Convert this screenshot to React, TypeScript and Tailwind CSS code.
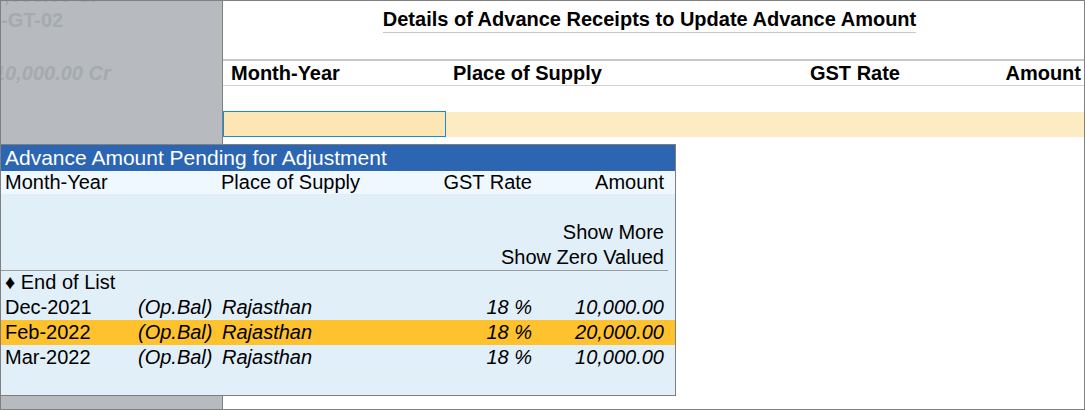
import React from "react";

const pending = [
  { month: "Dec-2021", place: "Rajasthan", rate: "18 %", amount: "10,000.00", active: false },
  { month: "Feb-2022", place: "Rajasthan", rate: "18 %", amount: "20,000.00", active: true },
  { month: "Mar-2022", place: "Rajasthan", rate: "18 %", amount: "10,000.00", active: false },
];

export default function App() {
  return (
    <div className="relative h-[410px] w-[1085px] overflow-hidden border border-[#808080] bg-white font-['Liberation_Sans',Arial,sans-serif] text-[20px] text-black">
      <div className="flex h-full">
        {/* Voucher behind the screen, dimmed */}
        <div className="w-[222px] shrink-0 overflow-hidden border-r border-[#808080] bg-[#b7bbbf] font-bold leading-[25px] text-[#a6aaae]">
          <div className="-mt-[18px] -ml-[8px] whitespace-nowrap">0,000.00 Cr</div>
          <div className="whitespace-nowrap">-GT-02</div>
          <div className="mt-[28px] -ml-[7px] whitespace-nowrap italic">10,000.00 Cr</div>
        </div>

        {/* Advance receipts detail */}
        <div className="flex min-w-0 flex-1 flex-col">
          <div className="flex justify-center pt-[6px] pr-[8px]">
            <span className="border-b border-[#c8c8c8] leading-[25px] font-bold">
              Details of Advance Receipts to Update Advance Amount
            </span>
          </div>

          <div className="mt-[26px] flex h-[27px] items-center border-t-2 border-b border-t-[#c8c8c8] border-b-[#d4d4d4] pr-[3px] pl-[8px] font-bold leading-[25px]">
            <div className="w-[222px]">Month-Year</div>
            <div className="flex-1">Place of Supply</div>
            <div>GST Rate</div>
            <div className="w-[181px] text-right">Amount</div>
          </div>

          <div className="mt-[25px] flex items-end">
            <div className="h-[26px] w-[223px] border border-[#1c8ad3] bg-[#fde6b3]" />
            <div className="h-[25px] flex-1 bg-[#fdebc4]" />
          </div>
        </div>
      </div>

      {/* Pending advances popup */}
      <div className="absolute top-[143px] -left-px flex h-[252px] w-[676px] flex-col border border-[#7f7f7f] bg-[#e1eff9]">
        <div className="h-[26px] bg-[#2c65b1] pl-[4px] text-[21px] leading-[26px] text-white">
          Advance Amount Pending for Adjustment
        </div>
        <div className="flex h-[23px] bg-[#eef8fe] pr-[11px] pl-[4px] leading-[22px]">
          <div className="w-[216px]">Month-Year</div>
          <div className="flex-1">Place of Supply</div>
          <div>GST Rate</div>
          <div className="w-[132px] text-right">Amount</div>
        </div>

        <div className="pt-[26px] pr-[11px] text-right leading-[25px]">
          <div>Show More</div>
          <div>Show Zero Valued</div>
        </div>
        <div className="mr-[7px] border-t border-[#9a9a9a]" />

        <div className="h-[24px] pl-[4px] leading-[22px]">♦ End of List</div>
        {pending.map((r) => (
          <div
            key={r.month}
            className={
              r.active
                ? "flex h-[25px] bg-[#fec22e] pr-[11px] pl-[4px] leading-[25px]"
                : "flex h-[25px] pr-[11px] pl-[4px] leading-[25px]"
            }
          >
            <div className="w-[133px]">{r.month}</div>
            <div className="w-[84px] italic">(Op.Bal)</div>
            <div className="flex-1 italic">{r.place}</div>
            <div className="italic">{r.rate}</div>
            <div className="w-[132px] text-right italic">{r.amount}</div>
          </div>
        ))}
      </div>
    </div>
  );
}
